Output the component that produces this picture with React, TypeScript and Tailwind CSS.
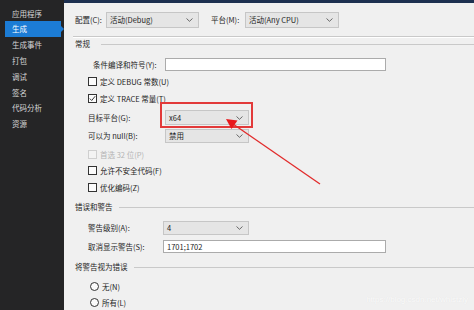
import React from 'react'

const navItems = ['应用程序', '生成', '生成事件', '打包', '调试', '签名', '代码分析', '资源']

const Chevron = () => (
    <svg width="7" height="4" viewBox="0 0 7 4" className="shrink-0">
        <path d="M0.5 0.5 L3.5 3.3 L6.5 0.5" fill="none" stroke="#5a5a5a" strokeWidth="0.9" />
    </svg>
)

type BoxProps = {
    value: string
    className: string
}
const Dropdown = ({ value, className }: BoxProps) => (
    <div className={`flex items-center justify-between bg-[#e5e5e5] border border-[#c6c6c6] pl-[3px] pr-[5px] ${className}`}>
        <span>{value}</span>
        <Chevron />
    </div>
)

const TextBox = ({ value, className }: BoxProps) => (
    <div className={`flex items-center bg-white border border-[#ababab] pl-[3px] ${className}`}>
        <span>{value}</span>
    </div>
)

type CheckProps = {
    label: string
    checked?: boolean
    disabled?: boolean
    className: string
}
const Check = ({ label, checked, disabled, className }: CheckProps) => (
    <div className={`flex items-center pl-[24px] h-[13px] ${className}`}>
        <div className={`w-[9px] h-[9px] border flex items-center justify-center ${disabled ? 'border-[#cfcfcf] bg-[#f3f3f3]' : 'border-[#333] bg-[#fbfbfb]'}`}>
            {checked && (
                <svg width="7" height="7" viewBox="0 0 7 7">
                    <path d="M0.8 3.6 L2.7 5.5 L6.2 1.2" fill="none" stroke="#222" strokeWidth="0.9" />
                </svg>
            )}
        </div>
        <span className={`ml-[3px] ${disabled ? 'text-[#b4b4b4]' : ''}`}>{label}</span>
    </div>
)

const Radio = ({ label, className }: { label: string, className: string }) => (
    <div className={`flex items-center pl-[26px] h-[13px] ${className}`}>
        <div className="w-[9px] h-[9px] rounded-full border border-[#333] bg-[#fbfbfb]" />
        <span className="ml-[3px]">{label}</span>
    </div>
)

const Section = ({ title, lineFrom, className }: { title: string, lineFrom: string, className: string }) => (
    <div className={`flex items-center h-[12px] pl-[11px] ${className}`}>
        <span className={lineFrom}>{title}</span>
        <div className="flex-1 h-[1px] bg-[#c9c9c9]" />
    </div>
)

const App = () => {
    return (
        <div className="relative flex w-[474px] h-[310px] overflow-hidden text-[7.5px] leading-none text-[#1e1e1e]"
            style={{ fontFamily: '"Noto Sans CJK SC", "Noto Sans", sans-serif' }}>
            <div className="flex flex-col w-[64px] h-full bg-[#252526] pt-[5.5px] shrink-0">
                {navItems.map((item) => item === '生成' ? (
                    <div key={item} className="relative flex items-center h-[15.8px] ml-[5px] mr-[3px] pl-[7px] bg-[#1c7cd5] text-white">
                        {item}
                        <div className="absolute right-[-3px] top-[5px] w-0 h-0 border-y-[3px] border-y-transparent border-l-[3px] border-l-[#1c7cd5]" />
                    </div>
                ) : (
                    <div key={item} className="flex items-center h-[15.8px] pl-[12px] text-[#d6d6d6]">{item}</div>
                ))}
            </div>

            <div className="flex flex-col flex-1 h-full bg-[#f0f0f0]">
                <div className="h-[3px] bg-[#1d3050]" />

                <div className="flex items-center h-[16px] mt-[9px] pl-[11px]">
                    <span className="w-[31px]">配置(C):</span>
                    <Dropdown value="活动(Debug)" className="w-[93px] h-[16px]" />
                    <span className="ml-[12px] w-[34px]">平台(M):</span>
                    <Dropdown value="活动(Any CPU)" className="w-[94px] h-[16px]" />
                </div>

                <div className="h-[2px] mt-[8px] ml-[9px] border-t border-[#c9c9c9] border-b border-b-white" />

                <Section title="常规" lineFrom="mr-[11px]" className="" />

                <div className="flex items-center h-[13px] mt-[8px] pl-[29px]">
                    <span className="w-[72px]">条件编译和符号(Y):</span>
                    <TextBox value="" className="w-[221px] h-[13px]" />
                </div>

                <Check label="定义 DEBUG 常数(U)" className="mt-[4px]" />
                <Check label="定义 TRACE 常量(T)" checked className="mt-[4px]" />

                <div className="flex items-center h-[15px] mt-[5px] pl-[24px]">
                    <span className="w-[77px]">目标平台(G):</span>
                    <div className="relative">
                        <Dropdown value="x64" className="w-[84px] h-[15px]" />
                        <div className="absolute left-[-5px] right-[-4px] top-[-8px] bottom-[-3px] border-2 border-[#e23a3a]" />
                    </div>
                </div>

                <div className="flex items-center h-[14px] mt-[4px] pl-[24px]">
                    <span className="w-[77px]">可以为 null(B):</span>
                    <Dropdown value="禁用" className="w-[84px] h-[14px]" />
                </div>

                <Check label="首选 32 位(P)" disabled className="mt-[5px]" />
                <Check label="允许不安全代码(F)" className="mt-[3px]" />
                <Check label="优化编码(Z)" className="mt-[4px]" />

                <Section title="错误和警告" lineFrom="mr-[6px]" className="mt-[7px]" />

                <div className="flex items-center h-[14px] mt-[8px] pl-[24px]">
                    <span className="w-[75px]">警告级别(A):</span>
                    <Dropdown value="4" className="w-[86px] h-[14px]" />
                </div>

                <div className="flex items-center h-[13px] mt-[5px] pl-[24px]">
                    <span className="w-[75px]">取消显示警告(S):</span>
                    <TextBox value="1701;1702" className="w-[223px] h-[13px]" />
                </div>

                <Section title="将警告视为错误" lineFrom="mr-[6px]" className="mt-[8px]" />

                <Radio label="无(N)" className="mt-[7px]" />
                <Radio label="所有(L)" className="mt-[3px]" />
            </div>

            <span className="absolute right-[6px] bottom-[6px] text-[8px] text-[#fafafa]"
                style={{ fontFamily: '"Liberation Sans", sans-serif', textShadow: '0 0 1px #e0e0e0' }}>
                https://blog.csdn.net/whistzly
            </span>

            <svg className="absolute left-0 top-0 pointer-events-none" width="474" height="310">
                <line x1="320" y1="184" x2="233" y2="124" stroke="#e22b2b" strokeWidth="1.3" />
                <polygon points="226,119 237.5,120.5 231.5,129" fill="#e8181c" />
            </svg>
        </div>
    )
}

export default App
